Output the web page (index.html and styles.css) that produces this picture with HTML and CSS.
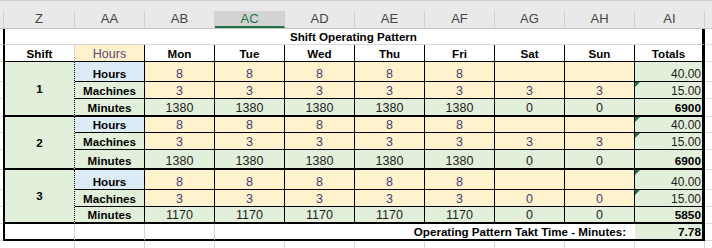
FILE: index.html
```html
<!DOCTYPE html>
<html>
<head>
<meta charset="utf-8">
<link rel="stylesheet" href="styles.css">
</head>
<body>
<div class="sheet">
  <div class="colhead">
    <div class="corner"></div>
    <div class="ch chz">Z</div>
    <div class="ch">AA</div>
    <div class="ch">AB</div>
    <div class="ch sel">AC</div>
    <div class="ch">AD</div>
    <div class="ch">AE</div>
    <div class="ch">AF</div>
    <div class="ch">AG</div>
    <div class="ch">AH</div>
    <div class="ch">AI</div>
    <div class="ch chj"></div>
  </div>
  <div class="grid">
    <div class="g"></div><div class="c title">Shift Operating Pattern</div><div class="g"></div>

    <div class="g"></div>
    <div class="c z b hz">Shift</div>
    <div class="c hh">Hours</div>
    <div class="c b">Mon</div><div class="c b">Tue</div><div class="c b">Wed</div><div class="c b">Thu</div><div class="c b">Fri</div><div class="c b">Sat</div><div class="c b">Sun</div>
    <div class="c b ai">Totals</div>
    <div class="g"></div>

    <!-- Shift 1 -->
    <div class="g"></div>
    <div class="c z b shift">1</div>
    <div class="c lab lh b">Hours</div>
    <div class="c d in">8</div><div class="c d in">8</div><div class="c d in">8</div><div class="c d in">8</div><div class="c d in">8</div><div class="c d"></div><div class="c d"></div>
    <div class="c ai tot">40.00</div>
    <div class="g"></div>

    <div class="g"></div>
    <div class="c lab lg b">Machines</div>
    <div class="c d in">3</div><div class="c d in">3</div><div class="c d in">3</div><div class="c d in">3</div><div class="c d in">3</div><div class="c d in">3</div><div class="c d in">3</div>
    <div class="c ai tot tri">15.00</div>
    <div class="g"></div>

    <div class="g"></div>
    <div class="c lab lg b end">Minutes</div>
    <div class="c m end">1380</div><div class="c m end">1380</div><div class="c m end">1380</div><div class="c m end">1380</div><div class="c m end">1380</div><div class="c m end">0</div><div class="c m end">0</div>
    <div class="c ai tot b end">6900</div>
    <div class="g"></div>

    <!-- Shift 2 -->
    <div class="g"></div>
    <div class="c z b shift">2</div>
    <div class="c lab lh b">Hours</div>
    <div class="c d in">8</div><div class="c d in">8</div><div class="c d in">8</div><div class="c d in">8</div><div class="c d in">8</div><div class="c d"></div><div class="c d"></div>
    <div class="c ai tot tri">40.00</div>
    <div class="g"></div>

    <div class="g"></div>
    <div class="c lab lg b">Machines</div>
    <div class="c d in">3</div><div class="c d in">3</div><div class="c d in">3</div><div class="c d in">3</div><div class="c d in">3</div><div class="c d in">3</div><div class="c d in">3</div>
    <div class="c ai tot tri">15.00</div>
    <div class="g"></div>

    <div class="g"></div>
    <div class="c lab lg b end">Minutes</div>
    <div class="c m end">1380</div><div class="c m end">1380</div><div class="c m end">1380</div><div class="c m end">1380</div><div class="c m end">1380</div><div class="c m end">0</div><div class="c m end">0</div>
    <div class="c ai tot b end">6900</div>
    <div class="g"></div>

    <!-- Shift 3 -->
    <div class="g"></div>
    <div class="c z b shift">3</div>
    <div class="c lab lh b">Hours</div>
    <div class="c d in">8</div><div class="c d in">8</div><div class="c d in">8</div><div class="c d in">8</div><div class="c d in">8</div><div class="c d"></div><div class="c d"></div>
    <div class="c ai tot tri">40.00</div>
    <div class="g"></div>

    <div class="g"></div>
    <div class="c lab lg b">Machines</div>
    <div class="c d in">3</div><div class="c d in">3</div><div class="c d in">3</div><div class="c d in">3</div><div class="c d in">3</div><div class="c d in">0</div><div class="c d in">0</div>
    <div class="c ai tot tri">15.00</div>
    <div class="g"></div>

    <div class="g"></div>
    <div class="c lab lg b end">Minutes</div>
    <div class="c m end">1170</div><div class="c m end">1170</div><div class="c m end">1170</div><div class="c m end">1170</div><div class="c m end">1170</div><div class="c m end">0</div><div class="c m end">0</div>
    <div class="c ai tot b end">5850</div>
    <div class="g"></div>

    <!-- Takt row -->
    <div class="g"></div>
    <div class="c z last blank"></div>
    <div class="c last blank"></div>
    <div class="c last blank"></div>
    <div class="c last takt b">Operating Pattern Takt Time - Minutes:</div>
    <div class="c ai tot b last">7.78</div>
    <div class="g"></div>

    <!-- below -->
    <div class="f0"></div>
    <div class="f"></div><div class="f"></div><div class="f"></div><div class="f"></div><div class="f"></div>
    <div class="f"></div><div class="f"></div><div class="f"></div><div class="f"></div><div class="f"></div>
    <div class="f0"></div>
  </div>
</div>
</body>
</html>
```
FILE: styles.css
```css
html, body {
  margin: 0;
  padding: 0;
  background: #ffffff;
}

.sheet {
  width: 712px;
  height: 248px;
  overflow: hidden;
  font-family: "Liberation Sans", Arial, sans-serif;
  color: #000;
}

/* column letters */
.colhead {
  box-sizing: border-box;
  height: 29px;
  display: flex;
  align-items: flex-end;
  background: #e9e9e9;
  border-top: 1px solid #d0d0d0;
  border-bottom: 1px solid #c4c4c4;
}

.corner {
  width: 4px;
  height: 17px;
  box-sizing: border-box;
  border-right: 1px solid #d0d0d0;
}

.ch {
  width: 70px;
  height: 17px;
  box-sizing: border-box;
  border-right: 1px solid #d0d0d0;
  font-size: 13px;
  line-height: 15px;
  color: #444;
  text-align: center;
  flex: none;
}

.chz { width: 71px; }
.chj { width: 7px; border-right: 0; }

.ch.sel {
  background: #d3d3d3;
  color: #217346;
  border-bottom: 2px solid #217346;
  line-height: 15px;
}

/* sheet grid */
.grid {
  display: grid;
  grid-template-columns: 3px 72px repeat(9, 70px) 7px;
  grid-template-rows: 16px 17px 20px 17px 18px 16px 17px 20px 20px 17px 17px 17px 7px;
}

.g {
  box-sizing: border-box;
  border-bottom: 1px solid #dcdcdc;
}

.c {
  box-sizing: border-box;
  display: flex;
  align-items: flex-end;
  justify-content: center;
  border-right: 1px solid #000;
  border-bottom: 1px solid #000;
  font-size: 12.5px;
  line-height: 14px;
  white-space: nowrap;
  position: relative;
}

.b {
  font-weight: bold;
  font-size: 11.6px;
}

.title {
  grid-column: 2 / 12;
  border-left: 2px solid #000;
  border-right: 3px solid #000;
  border-bottom: 1px solid #d6d6d6;
  font-weight: bold;
  font-size: 11.6px;
}

.z {
  border-left: 2px solid #000;
}

.hz {
  border-right: 1px solid #d6d6d6;
}

.hh {
  background: #fff2cc;
  color: #60497a;
}

.shift {
  grid-row: span 3;
  background: #e2efda;
  border-right: 1px dotted #000;
  border-bottom: 2px solid #000;
  align-items: center;
}

.lab { }
.lh { background: #ddebf7; }
.lg { background: #e2efda; }

.d { background: #fff2cc; }
.in { color: #3f3f76; }
.m { background: #e2efda; color: #222; }

.ai {
  border-right: 3px solid #000;
}

.tot {
  background: #e2efda;
  justify-content: flex-end;
  padding-right: 1px;
  color: #222;
  font-size: 12px;
}

.tot.b { color: #000; font-size: 11.8px; }

.end {
  border-bottom: 2px solid #000;
}

.last {
  border-bottom: 2px solid #000;
}

.blank {
  border-right: 1px solid #d6d6d6;
}

.takt {
  grid-column: span 6;
  justify-content: flex-end;
  padding-right: 9px;
  border-right: 0;
}

.tri::before {
  content: "";
  position: absolute;
  left: 0;
  top: 0;
  border-top: 5px solid #1e7145;
  border-right: 5px solid transparent;
}

.f {
  border-right: 1px solid #d6d6d6;
}

.f0 { }
```
